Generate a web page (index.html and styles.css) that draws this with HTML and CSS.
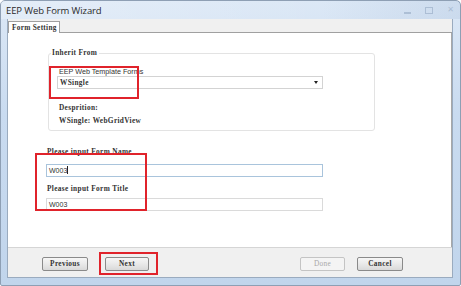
FILE: index.html
```html
<!DOCTYPE html>
<html lang="en">
<head>
    <meta charset="UTF-8">
    <title>EEP Web Form Wizard</title>
    <link rel="stylesheet" href="styles.css">
</head>
<body>
    <div class="window">
        <!-- 标题栏 -->
        <div class="titlebar">
            <span class="title">EEP Web Form Wizard</span>
            <div class="controls">
                <span class="ctl ctl-min"></span>
                <span class="ctl ctl-max"></span>
                <span class="ctl ctl-close">&#x2715;</span>
            </div>
        </div>

        <div class="client">
            <div class="tabs">
                <div class="tab">Form Setting</div>
            </div>

            <div class="page">
                <fieldset class="group">
                    <legend>Inherit From</legend>
                    <div class="field-label sans">EEP Web Template Forms</div>
                    <div class="combo">
                        <span>WSingle</span>
                        <span class="arrow"></span>
                    </div>
                    <div class="desc first">Desprition:</div>
                    <div class="desc">WSingle: WebGridView</div>
                </fieldset>

                <div class="form-fields">
                    <div class="label">Please input Form Name</div>
                    <div class="input focused">W003<span class="caret"></span></div>
                    <div class="label second">Please input Form Title</div>
                    <div class="input">W003</div>
                </div>

                <div class="mark mark-template"></div>
                <div class="mark mark-name"></div>
            </div>

            <div class="footer">
                <div class="btn">Previous</div>
                <div class="btn btn-next">Next</div>
                <div class="spacer"></div>
                <div class="btn disabled">Done</div>
                <div class="btn">Cancel</div>
                <div class="mark mark-next"></div>
            </div>
        </div>
    </div>
</body>
</html>
```

FILE: styles.css
```css
body {
    margin: 0;
    padding: 0;
    width: 461px;
    height: 286px;
    overflow: hidden;
    background: #fff;
}

.window {
    width: 461px;
    height: 286px;
    box-sizing: border-box;
    border: 1px solid #8e9fb4;
    border-radius: 5px 5px 2px 2px;
    background: linear-gradient(180deg, #dce8f6 0%, #c9dbf0 40%, #c1d5ec 100%);
    display: flex;
    flex-direction: column;
}

/* 标题栏 */
.titlebar {
    height: 18px;
    display: flex;
    align-items: center;
    padding: 0 6px 0 5px;
    background: linear-gradient(90deg, rgba(255,255,255,0.25) 0%, rgba(255,255,255,0) 70%, rgba(120,150,190,0.15) 100%);
}

.title {
    font-family: "Open Sans", "DejaVu Sans", sans-serif;
    font-size: 9.5px;
    color: #2a2a2a;
    letter-spacing: -0.1px;
}

.controls {
    margin-left: auto;
    display: flex;
    align-items: center;
    gap: 14px;
    opacity: 0.3;
}

.ctl {
    display: block;
    color: #5d7799;
}

.ctl-min {
    width: 7px;
    height: 2px;
    background: #5d7799;
    margin-top: 5px;
}

.ctl-max {
    width: 6px;
    height: 5px;
    border: 1px solid #5d7799;
}

.ctl-close {
    font-family: "DejaVu Sans", sans-serif;
    font-size: 8px;
    line-height: 8px;
}

.client {
    flex: 1;
    display: flex;
    flex-direction: column;
    margin: 0 7px 7px 6px;
    background: #f0f0f0;
    border: 1px solid #9aabbf;
    border-top: none;
    position: relative;
}

/* 标签页 */
.tabs {
    height: 13px;
    display: flex;
    align-items: flex-end;
    border-bottom: 1px solid #a0a0a0;
    background: #f0f0f0;
}

.tab {
    height: 12px;
    width: 52px;
    box-sizing: border-box;
    margin-bottom: -1px;
    background: #fff;
    border: 1px solid #a0a0a0;
    border-bottom: none;
    font-family: "Liberation Serif", serif;
    font-weight: bold;
    font-size: 7.3px;
    letter-spacing: 0.3px;
    line-height: 11px;
    padding-left: 3px;
    color: #333;
}

.page {
    height: 214px;
    background: #fff;
    border-right: 1px solid #a8a8a8;
    position: relative;
    font-family: "Liberation Serif", serif;
    font-weight: bold;
    font-size: 7.3px;
    letter-spacing: 0.35px;
    color: #333;
}

.group {
    margin: 15px 0 0 40px;
    width: 327px;
    box-sizing: border-box;
    border: 1px solid #e3e3e3;
    border-radius: 3px;
    padding: 9px 0 4px 8px;
}

.group legend {
    padding: 0 2px 0 1px;
    margin-left: -6px;
    line-height: 10px;
}

.field-label {
    line-height: 9px;
    padding-left: 2px;
}

.sans {
    font-family: "Liberation Sans", sans-serif;
    font-weight: normal;
    font-size: 7.2px;
    letter-spacing: 0;
    color: #333;
}

.combo {
    width: 266px;
    height: 13px;
    box-sizing: border-box;
    border: 1px solid #d3d3d3;
    display: flex;
    align-items: center;
    padding-left: 2px;
}

.arrow {
    margin-left: auto;
    margin-right: 4px;
    width: 0;
    height: 0;
    border-left: 2.5px solid transparent;
    border-right: 2.5px solid transparent;
    border-top: 3px solid #222;
}

.desc {
    line-height: 10px;
    margin-top: 3px;
    padding-left: 2px;
}

.desc.first {
    margin-top: 14px;
}

.form-fields {
    margin: 16px 0 0 38px;
}

.label {
    line-height: 10px;
    padding-left: 1px;
}

.label.second {
    margin-top: 7px;
}

.input {
    width: 277px;
    height: 13px;
    box-sizing: border-box;
    border: 1px solid #dadada;
    font-family: "Liberation Sans", sans-serif;
    font-weight: normal;
    font-size: 7px;
    letter-spacing: 0;
    line-height: 11px;
    padding-left: 2px;
    margin-top: 4px;
    color: #333;
}

.input.focused {
    margin-top: 7px;
    border-color: #a9c4dc;
}

.caret {
    display: inline-block;
    width: 1px;
    height: 8px;
    background: #222;
    vertical-align: -1px;
}

/* 底部按钮 */
.footer {
    flex: 1;
    display: flex;
    align-items: flex-start;
    padding: 9px 49px 0 34px;
    border-top: 1px solid #d5d5d5;
    position: relative;
    gap: 17px;
}

.spacer {
    flex: 1;
}

.btn {
    width: 46px;
    height: 14px;
    box-sizing: border-box;
    border: 1px solid #8a8a8a;
    border-radius: 2px;
    background: linear-gradient(180deg, #f6f6f6 0%, #e9e9e9 50%, #d9d9d9 100%);
    font-family: "Liberation Serif", serif;
    font-weight: bold;
    font-size: 7.3px;
    letter-spacing: 0.35px;
    line-height: 12px;
    text-align: center;
    color: #333;
}

.btn-next {
    width: 44px;
}

.btn.disabled {
    width: 45px;
    border-color: #c4c4c4;
    background: #f4f4f4;
    color: #a8a8a8;
    font-weight: normal;
    margin-right: -5px;
}

/* 红色标注框 */
.mark {
    position: absolute;
    border: 2px solid #e0232b;
    box-sizing: border-box;
}

.mark-template {
    left: 41px;
    top: 33px;
    width: 90px;
    height: 33px;
}

.mark-name {
    left: 27px;
    top: 120px;
    width: 112px;
    height: 58px;
}

.mark-next {
    left: 91px;
    top: 4px;
    width: 59px;
    height: 23px;
}
```
